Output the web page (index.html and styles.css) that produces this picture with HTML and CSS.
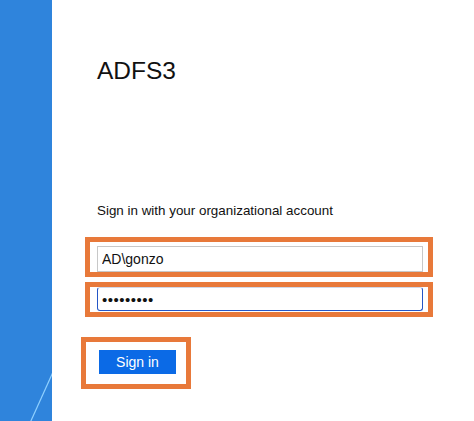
FILE: index.html
```html
<!DOCTYPE html>
<html lang="en">
<head>
  <meta charset="UTF-8" />
  <title>ADFS3 – Sign in</title>
  <link rel="stylesheet" href="styles.css">
</head>
<body>
  <div class="strip">
    <svg width="52" height="421" viewBox="0 0 52 421">
      <line x1="53" y1="372" x2="30" y2="423" stroke="#8fd0ff" stroke-width="1.2" />
    </svg>
  </div>
  <div class="main">
    <h1 class="title">ADFS3</h1>
    <p class="lead">Sign in with your organizational account</p>

    <div class="mark mark-user">
      <input type="text" class="field" value="AD\gonzo" />
    </div>
    <div class="mark mark-pass">
      <input type="password" class="field field-focus" value="password1" />
    </div>

    <div class="mark mark-btn">
      <button class="submit">Sign in</button>
    </div>
  </div>
</body>
</html>
```

FILE: styles.css
```css
body { margin: 0; display: flex; height: 421px; overflow: hidden; background: #fff; color: #111; font-family: "Liberation Sans", Arial, sans-serif; }
.strip { width: 52px; flex: none; background: #2f84dc; }
.strip svg { display: block; }
.main { flex: 1; padding-left: 33px; }
.title { margin: 55px 0 0 12px; font-size: 24.5px; font-weight: normal; line-height: 32px; }
.lead { margin: 116px 0 0 12px; font-size: 13.4px; line-height: 16px; }
.mark { border: 5px solid #e8793a; display: flex; width: fit-content; }
.mark-user { margin-top: 18px; padding: 4px 5px 0 7px; }
.mark-pass { margin-top: 5px; padding: 0 5px 1px 7px; }
.field { width: 326px; box-sizing: border-box; margin: 0; font-family: inherit; font-size: 14px; color: #111; background: #fff; outline: none; }
.mark-user .field { height: 26px; border: 1px solid #c8c8c8; padding: 0 4px; }
.field-focus { height: 24px; border: 1.5px solid #2456c6; border-top-color: #d0d8e8; border-radius: 3px; padding: 0 4px; font-size: 15px; letter-spacing: 0.5px; }
.mark-btn { margin: 20px 0 0 -4px; padding: 8px 10px 10px 13px; }
.submit { width: 77px; height: 24px; border: none; background: #0b6ae6; color: #fff; font-family: inherit; font-size: 14px; padding: 0; cursor: pointer; }
```
